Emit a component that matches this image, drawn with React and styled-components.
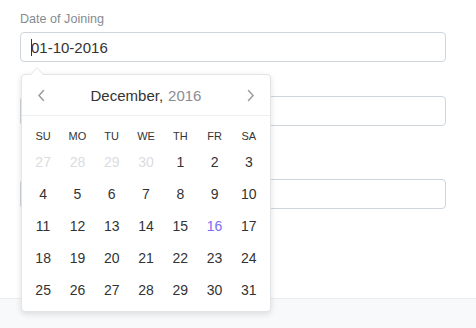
import React from 'react';
import styled, { createGlobalStyle } from 'styled-components';

const GlobalStyle = createGlobalStyle`
  html, body {
    margin: 0;
    padding: 0;
    background: #fff;
    font-family: "Liberation Sans", Arial, sans-serif;
  }
`;

const Page = styled.div`
  width: 476px;
  height: 328px;
  overflow: hidden;
  display: flex;
  flex-direction: column;
`;

const Form = styled.div`
  flex: 1;
  padding: 12px 30px 0 20px;
`;

const Field = styled.div`
  position: relative;
  margin-top: ${p => p.gap || 0}px;
`;

const Label = styled.div`
  font-size: 12.6px;
  line-height: 15px;
  color: #868b92;
  margin-bottom: 5px;
`;

const Input = styled.div`
  box-sizing: border-box;
  height: 30px;
  border: 1px solid #cfd5dc;
  border-radius: 4px;
  padding: 0 10px;
  display: flex;
  align-items: center;
  font-size: 15px;
  color: #333;
`;

const Caret = styled.span`
  display: inline-block;
  width: 1px;
  height: 17px;
  background: #333;
  margin-right: -1px;
`;

const Popup = styled.div`
  position: absolute;
  left: 1px;
  top: 62px;
  width: 250px;
  box-sizing: border-box;
  background: #fff;
  border: 1px solid #e2e4e8;
  border-radius: 4px;
  box-shadow: 0 2px 6px rgba(0, 0, 0, 0.12);
  z-index: 2;

  &::before, &::after {
    content: "";
    position: absolute;
    left: 8px;
    width: 0;
    height: 0;
    border-left: 7px solid transparent;
    border-right: 7px solid transparent;
  }
  &::before {
    top: -8px;
    border-bottom: 8px solid #dfe2e6;
  }
  &::after {
    top: -7px;
    border-bottom: 8px solid #fff;
  }
`;

const Head = styled.div`
  height: 40px;
  border-bottom: 1px solid #eceef0;
  display: flex;
  align-items: center;
  justify-content: space-between;
  padding: 0 15px;
  font-size: 15px;
  color: #333;
`;

const NavBtn = styled.span`
  display: flex;
  align-items: center;
  color: #9a9da2;
`;

const Year = styled.span`
  color: #8a8d92;
  margin-left: 5px;
`;

const Grid = styled.div`
  display: grid;
  grid-template-columns: repeat(7, 1fr);
  padding: 10px 4px 5px;
`;

const WeekDay = styled.div`
  height: 20px;
  line-height: 20px;
  text-align: center;
  font-size: 11px;
  color: #333;
`;

const Day = styled.div`
  height: 32px;
  line-height: 32px;
  text-align: center;
  font-size: 14px;
  color: ${p => (p.muted ? '#dadcdf' : p.today ? '#7b6cf6' : '#333')};
`;

const Footer = styled.div`
  height: 29px;
  border-top: 1px solid #ebedef;
  background: #f8f9fa;
`;

const Chevron = ({ dir }) => (
  <svg width="8" height="13" viewBox="0 0 8 13">
    <path
      d={dir === 'left' ? 'M6.5 1.5 L2 6.5 L6.5 11.5' : 'M1.5 1.5 L6 6.5 L1.5 11.5'}
      fill="none"
      stroke="currentColor"
      strokeWidth="1.5"
      strokeLinecap="round"
    />
  </svg>
);

const weekDays = ['SU', 'MO', 'TU', 'WE', 'TH', 'FR', 'SA'];

function App() {
  const days = [];
  [27, 28, 29, 30].forEach(d => days.push({ d, muted: true }));
  for (let i = 1; i <= 31; i++) days.push({ d: i, today: i === 16 });

  return (
    <Page>
      <GlobalStyle />
      <Form>
        <Field>
          <Label>Date of Joining</Label>
          <Input><Caret />01-10-2016</Input>
          <Popup>
            <Head>
              <NavBtn><Chevron dir="left" /></NavBtn>
              <span>December,<Year>2016</Year></span>
              <NavBtn><Chevron dir="right" /></NavBtn>
            </Head>
            <Grid>
              {weekDays.map(w => <WeekDay key={w}>{w}</WeekDay>)}
              {days.map((x, i) => (
                <Day key={i} muted={x.muted} today={x.today}>{x.d}</Day>
              ))}
            </Grid>
          </Popup>
        </Field>
        <Field gap={34}>
          <Input />
        </Field>
        <Field gap={53}>
          <Input />
        </Field>
      </Form>
      <Footer />
    </Page>
  );
}

export default App;
